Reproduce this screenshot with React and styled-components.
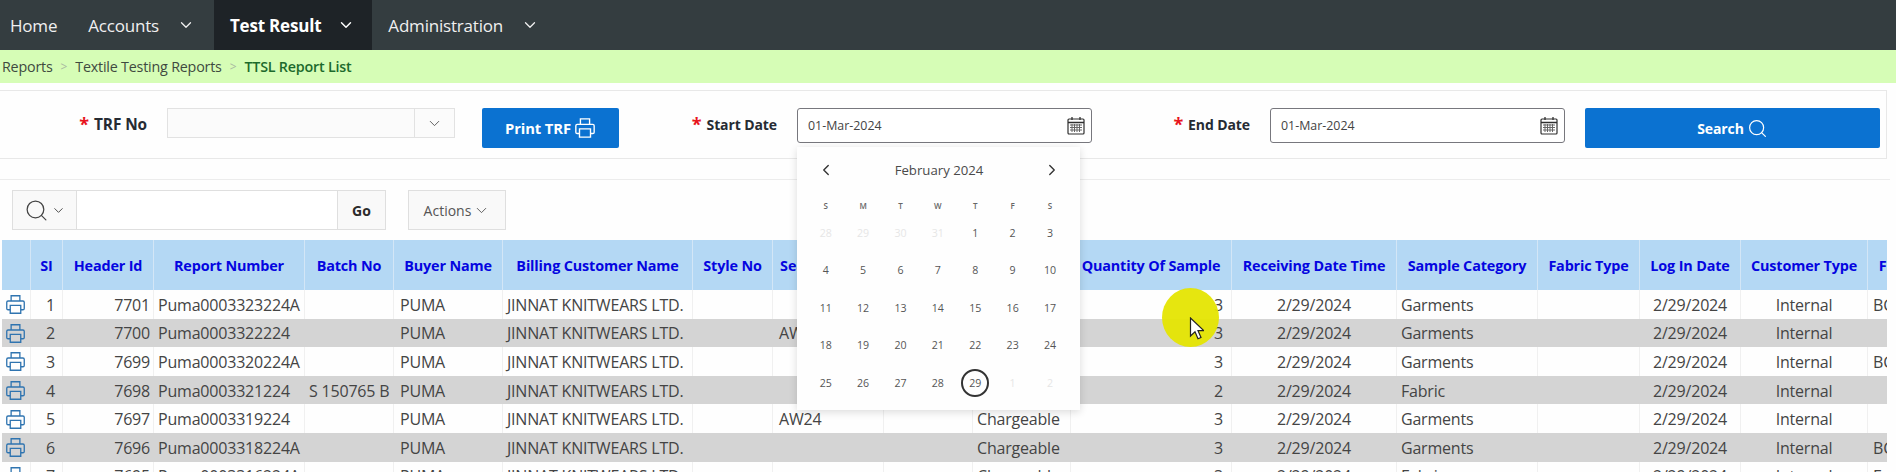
import React from 'react'
import styled, { createGlobalStyle } from 'styled-components'
import { ChevronDown, ChevronLeft, ChevronRight, Search } from 'lucide-react'

const GlobalStyle = createGlobalStyle`
  html, body {
    margin: 0;
    background: #fefefe;
    font-family: "Open Sans", "Noto Sans", sans-serif;
    color: #333;
  }
  * { box-sizing: border-box; }
`

const Page = styled.div`
  position: relative;
  width: 1896px;
  height: 472px;
  overflow: hidden;
`
const Nav = styled.nav`
  display: flex;
  height: 50px;
  background: #343d40;
  color: #f2f2f2;
  font-size: 17px;
`
const NavItem = styled.div`
  display: flex;
  align-items: center;
  gap: ${p => p.$gap || 19}px;
  padding: 0 ${p => p.$right || 0}px 0 ${p => p.$left || 16}px;
  background: ${p => (p.$active ? '#1e2327' : 'transparent')};
  font-weight: ${p => (p.$active ? 700 : 400)};
  color: ${p => (p.$active ? '#fff' : '#f0f0f0')};
  letter-spacing: -0.2px;
`
const Crumbs = styled.div`
  display: flex;
  align-items: center;
  height: 33px;
  padding-left: 2px;
  gap: 8px;
  background: #d6fdb6;
  font-size: 14.3px;
  letter-spacing: -0.2px;
  color: #3f4a3f;
`
const CrumbSep = styled.span`
  color: #a9b8a0;
  font-size: 12px;
`
const CrumbNow = styled.span`
  color: #1c6a2c;
  font-weight: 600;
`
const FormPanel = styled.div`
  display: flex;
  align-items: flex-start;
  height: 69px;
  width: 1887px;
  margin-top: 7px;
  padding-top: 17px;
  border: solid #e8e8e8;
  border-width: 1px 1px 1px 0;
`
const FieldLabel = styled.label`
  width: ${p => p.$width}px;
  height: 32px;
  padding-right: 20px;
  display: flex;
  align-items: center;
  justify-content: flex-end;
  gap: 5px;
  font-size: ${p => p.$size || 14}px;
  font-weight: 700;
  letter-spacing: -0.1px;
  color: #262b33;
`
const Star = styled.span`
  color: #e8141c;
  font-size: 18px;
  font-weight: 700;
`
const SelectBox = styled.div`
  display: flex;
  width: 288px;
  height: 30px;
  border: 1px solid #e2e2e2;
  background: #fbfbfb;
`
const SelectValue = styled.div`
  flex: 1;
  border-right: 1px solid #e2e2e2;
`
const SelectArrow = styled.div`
  width: 39px;
  display: flex;
  align-items: center;
  justify-content: center;
  color: #555;
`
const PrimaryButton = styled.div`
  display: flex;
  align-items: center;
  justify-content: center;
  gap: ${p => p.$gap || 3}px;
  width: ${p => p.$width}px;
  height: 40px;
  margin-left: ${p => p.$offset}px;
  border-radius: 2px;
  background: #0b72d1;
  color: #fff;
  font-size: ${p => p.$size || 14}px;
  font-weight: 700;
  letter-spacing: -0.1px;
`
const DateField = styled.div`
  position: relative;
  display: flex;
  align-items: center;
  justify-content: space-between;
  width: 295px;
  height: 35px;
  padding: 0 6px 0 10px;
  border: 1px solid #77777d;
  border-radius: 3px;
  background: #fff;
  font-size: 12.4px;
  color: #444;
`
const Popup = styled.div`
  position: absolute;
  left: -1px;
  top: 38px;
  width: 283px;
  height: 263px;
  padding: 0 11px 0 10px;
  background: #fefefe;
  box-shadow: 0 2px 8px rgba(0, 0, 0, 0.14);
  z-index: 3;
`
const PopupHead = styled.div`
  display: flex;
  align-items: center;
  justify-content: space-between;
  height: 46px;
  padding: 0 8px 0 10px;
  font-size: 13.2px;
  color: #4a4a4a;
`
const DayGrid = styled.div`
  display: grid;
  grid-template-columns: repeat(7, 37.4px);
  grid-auto-rows: 37.5px;
  margin-top: -3px;
`
const WeekDay = styled.div`
  display: flex;
  align-items: center;
  justify-content: center;
  height: 24px;
  font-size: 8px;
  font-weight: 600;
  color: #666;
`
const WeekRow = styled.div`
  display: grid;
  grid-template-columns: repeat(7, 37.4px);
`
const Day = styled.div`
  display: flex;
  align-items: center;
  justify-content: center;
  font-size: 10.6px;
  color: ${p => (p.$muted ? '#e6e6e6' : '#555')};
`
const TodayRing = styled.span`
  display: flex;
  align-items: center;
  justify-content: center;
  width: 28px;
  height: 28px;
  border: 2px solid #333;
  border-radius: 50%;
`
const ReportRegion = styled.div`
  width: 1890px;
  margin-top: 20px;
  padding-top: 10px;
  border-top: 1px solid #ececec;
`
const Toolbar = styled.div`
  display: flex;
  height: 40px;
  margin-left: 12px;
`
const ToolCell = styled.div`
  display: flex;
  align-items: center;
  justify-content: ${p => (p.$grow ? 'flex-start' : 'center')};
  width: ${p => p.$width}px;
  margin-left: ${p => p.$offset || 0}px;
  gap: 2px;
  border: 1px solid #dfdfdf;
  border-left-width: ${p => (p.$joined ? 0 : 1)}px;
  background: ${p => (p.$grow ? '#fff' : '#f9f9f9')};
  font-size: 14px;
  font-weight: ${p => (p.$bold ? 700 : 400)};
  color: ${p => (p.$bold ? '#2b2b2b' : '#555')};
`
const Grid = styled.div`
  width: 1885px;
  margin: 10px 0 0 2px;
  overflow: hidden;
`
const COLS = '29px 32px 91px 151px 89px 109px 190px 80px 111px 89px 98px 161px 165px 141px 102px 101px 127px 30px'

const Row = styled.div`
  display: grid;
  grid-template-columns: ${COLS};
  height: ${p => (p.$head ? 50 : 28.6)}px;
  background: ${p => (p.$head ? '#b4d8f4' : p.$shade ? '#d4d4d4' : '#fefefe')};
`
const HeadCell = styled.div`
  display: flex;
  align-items: center;
  justify-content: center;
  border-right: 1px solid #d3e6f6;
  white-space: nowrap;
  overflow: hidden;
  font-size: 14.4px;
  font-weight: 700;
  letter-spacing: -0.15px;
  color: #0505e0;
`
const Cell = styled.div`
  display: flex;
  align-items: center;
  justify-content: ${p => p.$align || 'flex-start'};
  padding: 1px ${p => p.$right || 4}px 0 ${p => p.$left || 4}px;
  border-right: 1px solid ${p => (p.$shade ? '#d4d4d4' : '#f0f0f0')};
  white-space: nowrap;
  overflow: hidden;
  font-size: 16px;
  letter-spacing: -0.2px;
  color: #444;
`
const Highlight = styled.div`
  position: absolute;
  left: 1162px;
  top: 288px;
  width: 57px;
  height: 59px;
  border-radius: 50%;
  background: rgba(228, 228, 0, 0.94);
  z-index: 4;
`
const Pointer = styled.svg`
  position: absolute;
  left: 1189px;
  top: 317px;
  z-index: 5;
`

const PrinterIcon = ({ size = 22, color = '#fff' }) => (
  <svg width={size} height={size} viewBox="0 0 24 24" fill="none" stroke={color} strokeWidth="1.5">
    <path d="M7 8V2h10v6" />
    <path d="M6 18H3.500A1.500 1.500 0 0 1 2 16.500v-7A1.500 1.500 0 0 1 3.500 8h17A1.500 1.500 0 0 1 22 9.500v7a1.500 1.500 0 0 1-1.500 1.500H18" />
    <path d="M6 13h12v9H6z" />
  </svg>
)

const CalendarIcon = () => (
  <svg width="18" height="19" viewBox="0 0 18 19" fill="none" stroke="#2f2f2f">
    <rect x="1" y="3" width="16" height="15" rx="1" strokeWidth="1.2" />
    <path d="M1 6.500h16" strokeWidth="1.500" />
    <path d="M5 1v3M13 1v3" strokeWidth="1.300" />
    <path d="M3 9h12M3 11.500h12M3 14h12M5 8v8M7.500 8v8M10 8v8M12.500 8v8" strokeWidth="1" stroke="#666" />
  </svg>
)

const FormField = ({ label, width, size }) => (
  <FieldLabel $width={width} $size={size}>
    <Star>*</Star>
    {label}
  </FieldLabel>
)

const weekDays = ['S', 'M', 'T', 'W', 'T', 'F', 'S']
const lead = [28, 29, 30, 31]
const days = Array.from({ length: 29 }, (_, i) => i + 1)
const trail = [1, 2]

const DatePopup = () => (
  <Popup>
    <PopupHead>
      <ChevronLeft size={18} strokeWidth={1.8} color="#333" />
      February 2024
      <ChevronRight size={18} strokeWidth={1.8} color="#333" />
    </PopupHead>
    <WeekRow>
      {weekDays.map((d, i) => <WeekDay key={i}>{d}</WeekDay>)}
    </WeekRow>
    <DayGrid>
      {lead.map(d => <Day key={'l' + d} $muted>{d}</Day>)}
      {days.map(d => (
        <Day key={d}>{d === 29 ? <TodayRing>{d}</TodayRing> : d}</Day>
      ))}
      {trail.map(d => <Day key={'t' + d} $muted>{d}</Day>)}
    </DayGrid>
  </Popup>
)

const headers = ['', 'SI', 'Header Id', 'Report Number', 'Batch No', 'Buyer Name', 'Billing Customer Name', 'Style No', 'Season Name', '', 'Billing Type', 'Quantity Of Sample', 'Receiving Date Time', 'Sample Category', 'Fabric Type', 'Log In Date', 'Customer Type', 'F']

const rows = [
  { si: 1, id: 7701, report: 'Puma0003323224A', season: '', qty: 3, cat: 'Garments', last: 'BC' },
  { si: 2, id: 7700, report: 'Puma0003322224', season: 'AW24', qty: 3, cat: 'Garments', last: '' },
  { si: 3, id: 7699, report: 'Puma0003320224A', season: '', qty: 3, cat: 'Garments', last: 'BC' },
  { si: 4, id: 7698, report: 'Puma0003321224', batch: 'S 150765 B', season: '', qty: 2, cat: 'Fabric', last: '' },
  { si: 5, id: 7697, report: 'Puma0003319224', season: 'AW24', qty: 3, cat: 'Garments', last: '' },
  { si: 6, id: 7696, report: 'Puma0003318224A', season: '', qty: 3, cat: 'Garments', last: 'BC' },
  { si: 7, id: 7695, report: 'Puma0003316224A', season: '', qty: 3, cat: 'Fabric', last: 'F' },
]

const ReportRow = ({ row, shade }) => (
  <Row $shade={shade}>
    <Cell $shade={shade} $left={3} $right={0}><PrinterIcon size={21} color="#2f74b0" /></Cell>
    <Cell $shade={shade} $align="flex-end" $right={7}>{row.si}</Cell>
    <Cell $shade={shade} $align="flex-end" $right={3}>{row.id}</Cell>
    <Cell $shade={shade}>{row.report}</Cell>
    <Cell $shade={shade}>{row.batch}</Cell>
    <Cell $shade={shade} $left={6}>PUMA</Cell>
    <Cell $shade={shade}>JINNAT KNITWEARS LTD.</Cell>
    <Cell $shade={shade} />
    <Cell $shade={shade} $left={6}>{row.season}</Cell>
    <Cell $shade={shade} />
    <Cell $shade={shade}>Chargeable</Cell>
    <Cell $shade={shade} $align="flex-end" $right={8}>{row.qty}</Cell>
    <Cell $shade={shade} $align="center">2/29/2024</Cell>
    <Cell $shade={shade}>{row.cat}</Cell>
    <Cell $shade={shade} />
    <Cell $shade={shade} $align="center">2/29/2024</Cell>
    <Cell $shade={shade} $align="center">Internal</Cell>
    <Cell $shade={shade} $left={5} $right={0}>{row.last}</Cell>
  </Row>
)

export default function App() {
  return (
    <Page>
      <GlobalStyle />
      <Nav>
        <NavItem $left={10} $right={15}>Home</NavItem>
        <NavItem $left={16} $right={19} $gap={18}>Accounts<ChevronDown size={18} strokeWidth={1.7} /></NavItem>
        <NavItem $active $right={17} $gap={16}>Test Result<ChevronDown size={18} strokeWidth={1.9} /></NavItem>
        <NavItem $gap={18}>Administration<ChevronDown size={18} strokeWidth={1.7} /></NavItem>
      </Nav>
      <Crumbs>
        Reports
        <CrumbSep>&gt;</CrumbSep>
        Textile Testing Reports
        <CrumbSep>&gt;</CrumbSep>
        <CrumbNow>TTSL Report List</CrumbNow>
      </Crumbs>
      <FormPanel>
        <FormField label="TRF No" width={167} size={15.4} />
        <SelectBox>
          <SelectValue />
          <SelectArrow><ChevronDown size={17} strokeWidth={1.3} /></SelectArrow>
        </SelectBox>
        <PrimaryButton $width={137} $offset={27} $size={14.8}>Print TRF <PrinterIcon /></PrimaryButton>
        <FormField label="Start Date" width={178} />
        <DateField>
          01-Mar-2024
          <CalendarIcon />
          <DatePopup />
        </DateField>
        <FormField label="End Date" width={178} />
        <DateField>
          01-Mar-2024
          <CalendarIcon />
        </DateField>
        <PrimaryButton $width={295} $offset={20}>Search <Search size={21} strokeWidth={1.4} /></PrimaryButton>
      </FormPanel>
      <ReportRegion>
        <Toolbar>
          <ToolCell $width={65}>
            <Search size={25} strokeWidth={1.2} color="#444" />
            <ChevronDown size={15} strokeWidth={1.5} color="#444" />
          </ToolCell>
          <ToolCell $width={261} $grow $joined />
          <ToolCell $width={48} $joined $bold>Go</ToolCell>
          <ToolCell $width={98} $offset={22}>
            Actions
            <ChevronDown size={17} strokeWidth={1.3} />
          </ToolCell>
        </Toolbar>
        <Grid>
          <Row $head>
            {headers.map((h, i) => <HeadCell key={i}>{h}</HeadCell>)}
          </Row>
          {rows.map((row, i) => <ReportRow key={row.id} row={row} shade={i % 2 === 1} />)}
        </Grid>
      </ReportRegion>
      <Highlight />
      <Pointer width="15" height="24" viewBox="0 0 15 24">
        <path d="M1.500 1v18l4.500-4.200 3 7 3-1.300-3-6.800h6z" fill="#fff" stroke="#222" strokeWidth="1.200" />
      </Pointer>
    </Page>
  )
}
